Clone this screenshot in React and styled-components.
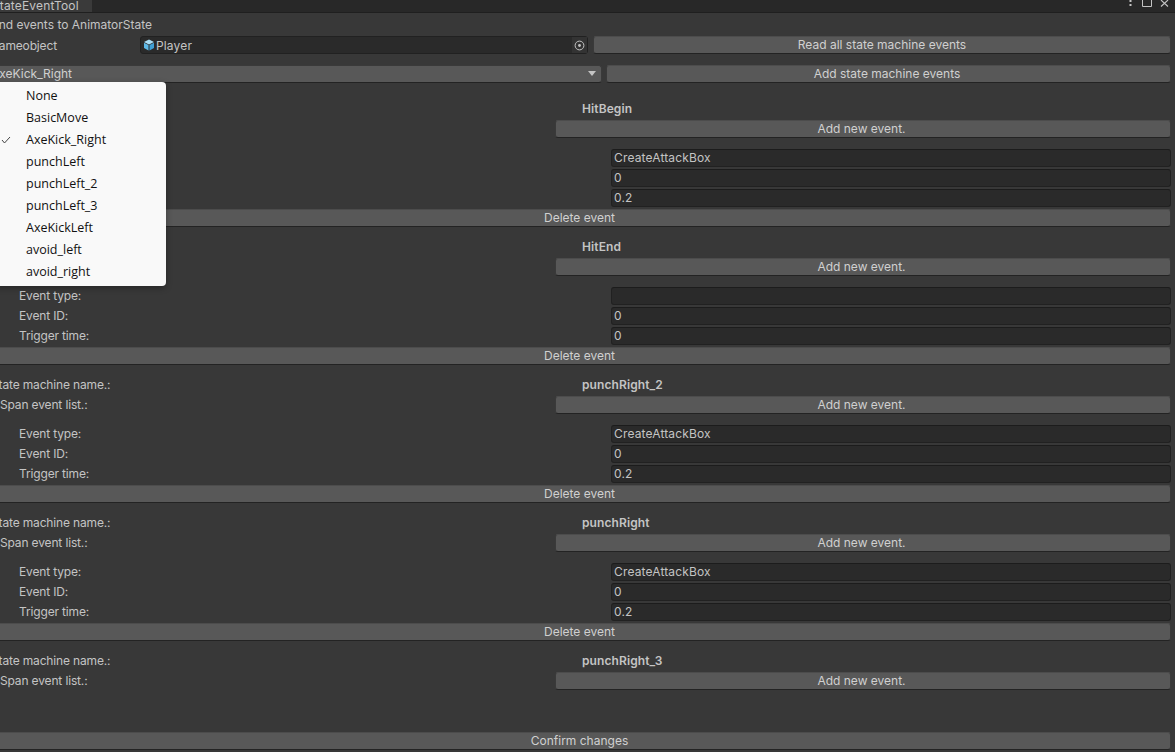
import React from 'react'
import styled, { createGlobalStyle } from 'styled-components'

const GlobalStyle = createGlobalStyle`
    html, body {
        margin: 0;
        padding: 0;
        height: 100%;
        overflow: hidden;
        background: #383838;
    }
    #root {
        height: 100%;
    }
`

const Window = styled.div`
    position: relative;
    width: 1175px;
    height: 752px;
    display: flex;
    flex-direction: column;
    overflow: hidden;
    background: #383838;
    color: #c4c4c4;
    font-family: Inter, "Liberation Sans", sans-serif;
    font-size: 12px;
`

const TabBar = styled.div`
    flex: none;
    height: 12px;
    display: flex;
    justify-content: space-between;
    background: #282828;
    border-bottom: 1px solid #1f1f1f;
`

const Tab = styled.div`
    width: 92px;
    height: 12px;
    background: #3a3a3a;
    color: #c4c4c4;
    line-height: 11px;
    overflow: hidden;
    text-indent: -8px;
    letter-spacing: 0.15px;
    white-space: nowrap;
`

const WindowIcons = styled.div`
    display: flex;
    align-items: flex-start;
    gap: 8px;
    padding-right: 6px;
`

const Content = styled.div`
    flex: 1;
    display: flex;
    flex-direction: column;
    margin-left: -12px;
    width: 1183px;
`

const Title = styled.div`
    height: 20px;
    margin: 2px 0 0 -4px;
    line-height: 20px;
`

const Row = styled.div`
    display: flex;
    align-items: center;
    height: 20px;
`

const Label = styled.div`
    flex: none;
    width: ${p => p.$width}px;
    padding-left: ${p => p.$indent || 0}px;
    box-sizing: border-box;
    letter-spacing: -0.15px;
    white-space: nowrap;
`

const SectionLabel = styled(Label)`
    margin-bottom: 2px;
`

const Button = styled.button`
    flex: 1;
    height: 18px;
    padding: 0 ${p => (p.$flush ? 0 : 3)}px 1px 0;
    margin: 0;
    box-sizing: border-box;
    background: #585858;
    border: 1px solid #3a3a3a;
    border-top-color: #4c4c4c;
    border-bottom-color: #232323;
    border-radius: 3px;
    color: #d0d0d0;
    font: inherit;
    line-height: 15px;
    text-align: center;
`

const ObjectField = styled.div`
    flex: none;
    width: 448px;
    height: 18px;
    margin-right: 5px;
    box-sizing: border-box;
    display: flex;
    align-items: center;
    background: #2a2a2a;
    border: 1px solid #212121;
    border-radius: 3px;
    padding-left: 2px;
    color: #c4c4c4;
    gap: 1px;
    letter-spacing: 0.15px;
`

const ObjectName = styled.span`
    flex: 1;
`

const Picker = styled.div`
    flex: none;
    width: 15px;
    height: 16px;
    display: flex;
    align-items: center;
    justify-content: center;
    background: #333333;
`

const TopRow = styled(Row)`
    height: 18px;
    margin-top: ${p => p.$top}px;
`

const Popup = styled.div`
    flex: none;
    width: 614px;
    height: 18px;
    margin-right: 4px;
    padding: 0 5px 1px 2px;
    box-sizing: border-box;
    display: flex;
    align-items: center;
    justify-content: space-between;
    background: #585858;
    border: 1px solid #3a3a3a;
    border-bottom-color: #232323;
    border-radius: 3px;
    color: #d0d0d0;
    white-space: nowrap;
`

const Arrow = styled.span`
    width: 0;
    height: 0;
    border-left: 4px solid transparent;
    border-right: 4px solid transparent;
    border-top: 5px solid #c4c4c4;
`

const Sections = styled.div`
    display: flex;
    flex-direction: column;
    gap: 10px;
    margin-top: 16px;
`

const Section = styled.div`
    display: flex;
    flex-direction: column;
`

const MachineName = styled.div`
    margin-bottom: 2px;
    font-weight: 600;
    color: #c4c4c4;
    letter-spacing: 0.1px;
`

const EventRows = styled.div`
    display: flex;
    flex-direction: column;
    margin-top: 9px;
`

const Field = styled.div`
    flex: 1;
    height: 18px;
    box-sizing: border-box;
    padding: 0 2px;
    line-height: 16px;
    background: #2a2a2a;
    border: 1px solid #212121;
    border-top-color: #1c1c1c;
    border-radius: 3px;
    color: #c4c4c4;
    letter-spacing: 0.15px;
`

const WideButton = styled(Button)`
    flex: none;
    width: 1183px;
    margin-top: 1px;
    padding-right: 0;
`

const ConfirmButton = styled(WideButton)`
    margin-top: auto;
    margin-bottom: 2px;
`

const Menu = styled.div`
    position: absolute;
    left: -6px;
    top: 82px;
    width: 172px;
    height: 204px;
    padding: 3px 0 1px;
    box-sizing: border-box;
    background: #f9f9f9;
    border-radius: 4px;
    box-shadow: 0 2px 6px rgba(0, 0, 0, 0.3);
    color: #111111;
    font-family: "Open Sans", "Noto Sans", sans-serif;
    font-size: 12.5px;
`

const MenuItem = styled.div`
    position: relative;
    height: 22px;
    line-height: 22px;
    padding-left: 32px;
    white-space: nowrap;
`

const Check = styled.svg`
    position: absolute;
    left: 7px;
    top: 7px;
`

const menuItems = ['None', 'BasicMove', 'AxeKick_Right', 'punchLeft', 'punchLeft_2', 'punchLeft_3', 'AxeKickLeft', 'avoid_left', 'avoid_right']

const sections = [
    { name: 'HitBegin', event: { type: 'CreateAttackBox', id: '0', time: '0.2' } },
    { name: 'HitEnd', event: { type: '', id: '0', time: '0' } },
    { name: 'punchRight_2', event: { type: 'CreateAttackBox', id: '0', time: '0.2' } },
    { name: 'punchRight', event: { type: 'CreateAttackBox', id: '0', time: '0.2' } },
    { name: 'punchRight_3' },
]

const CubeIcon = () => (
    <svg width="12" height="12" viewBox="0 0 12 12">
        <path d="M6 .6 11 3 6 5.4 1 3z" fill="#a8ddf5" />
        <path d="M1 3.8 5.5 6v5.4L1 9z" fill="#5cb8e6" />
        <path d="M11 3.8 6.5 6v5.4L11 9z" fill="#3f9fd4" />
    </svg>
)

const TargetIcon = () => (
    <svg width="11" height="11" viewBox="0 0 11 11">
        <circle cx="5.5" cy="5.5" r="4.4" fill="none" stroke="#c4c4c4" strokeWidth="1" />
        <circle cx="5.5" cy="5.5" r="1.4" fill="#c4c4c4" />
    </svg>
)

const WindowButtons = () => (
    <WindowIcons>
        <svg width="5" height="8" viewBox="0 0 5 8">
            <rect x="0.5" y="0" width="2" height="2" fill="#c4c4c4" />
            <rect x="0.5" y="4" width="2" height="2" fill="#c4c4c4" />
        </svg>
        <svg width="10" height="8" viewBox="0 0 10 8">
            <path d="M.5 0v6.5h9V0" fill="none" stroke="#c4c4c4" />
        </svg>
        <svg width="9" height="8" viewBox="0 0 9 8">
            <path d="M1 0 8 6.5M8 0 1 6.5" fill="none" stroke="#c4c4c4" strokeWidth="1.1" />
        </svg>
    </WindowIcons>
)

const EventEditor = ({ event }) => (
    <>
        <EventRows>
            <Row>
                <SectionLabel $width={623} $indent={31}>Event type:</SectionLabel>
                <Field>{event.type}</Field>
            </Row>
            <Row>
                <SectionLabel $width={623} $indent={31}>Event ID:</SectionLabel>
                <Field>{event.id}</Field>
            </Row>
            <Row>
                <SectionLabel $width={623} $indent={31}>Trigger time:</SectionLabel>
                <Field>{event.time}</Field>
            </Row>
        </EventRows>
        <WideButton>Delete event</WideButton>
    </>
)

const MachineSection = ({ name, event }) => (
    <Section>
        <Row>
            <SectionLabel $width={594} $indent={3}>State machine name.:</SectionLabel>
            <MachineName>{name}</MachineName>
        </Row>
        <Row>
            <SectionLabel $width={567} $indent={12}>Span event list.:</SectionLabel>
            <Button>Add new event.</Button>
        </Row>
        {event && <EventEditor event={event} />}
    </Section>
)

export default function App() {
    return (
        <Window>
            <GlobalStyle />
            <TabBar>
                <Tab>StateEventTool</Tab>
                <WindowButtons />
            </TabBar>
            <Content>
                <Title>Send events to AnimatorState</Title>
                <TopRow $top={1}>
                    <Label $width={152} $indent={2}>Gameobject</Label>
                    <ObjectField>
                        <CubeIcon />
                        <ObjectName>Player</ObjectName>
                        <Picker><TargetIcon /></Picker>
                    </ObjectField>
                    <Button $flush>Read all state machine events</Button>
                </TopRow>
                <TopRow $top={11}>
                    <Popup>
                        AxeKick_Right
                        <Arrow />
                    </Popup>
                    <Button>Add state machine events</Button>
                </TopRow>
                <Sections>
                    {sections.map(s => (
                        <MachineSection key={s.name} name={s.name} event={s.event} />
                    ))}
                </Sections>
                <ConfirmButton>Confirm changes</ConfirmButton>
            </Content>
            <Menu>
                {menuItems.map(item => (
                    <MenuItem key={item}>
                        {item === 'AxeKick_Right' && (
                            <Check width="10" height="8" viewBox="0 0 10 8">
                                <path d="M1 4 3.5 7 9 1" fill="none" stroke="#444444" strokeWidth="1" />
                            </Check>
                        )}
                        {item}
                    </MenuItem>
                ))}
            </Menu>
        </Window>
    )
}
